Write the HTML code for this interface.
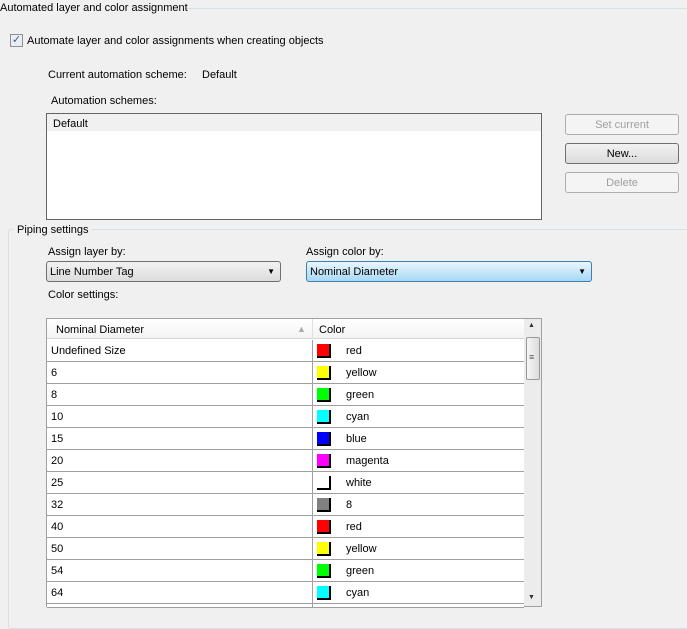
<!DOCTYPE html>
<html><head><style>
*{margin:0;padding:0;box-sizing:border-box}
body{width:687px;height:620px;background:#f0f0f0;font-family:"Liberation Sans",sans-serif;font-size:11px;color:#000;position:relative;overflow:hidden}
.a{position:absolute;white-space:nowrap}
.btn{position:absolute;left:565px;width:114px;height:21px;border:1px solid #adadad;border-radius:3px;background:#f4f4f4;color:#a0a0a0;text-align:center;line-height:20px}
.row{position:absolute;left:47px;width:477px;height:22px;border-bottom:1px solid #a0a0a0;background:#fff}
.row span{position:absolute;top:5px}
.sw{position:absolute;left:270px;top:4px;width:14px;height:14px;border-right:2px solid #000;border-bottom:2px solid #000}
.cs{position:absolute;left:265px;top:0;width:1px;height:22px;background:#a0a0a0}
</style></head><body>
<div class="a" style="top:8px;height:1px;background:#d5dfe5;left:185px;width:502px"></div>
<div class="a" style="left:0;top:2px;">Automated layer and color assignment</div>
<div class="a" style="left:10px;top:34px;width:13px;height:13px;border:1px solid #8e8f8f;background:#e8eef4;font-size:11px;line-height:11px;text-align:center;color:#4a5a8a">✓</div>
<div class="a" style="left:27px;top:35px">Automate layer and color assignments when creating objects</div>
<div class="a" style="left:48px;top:69px">Current automation scheme:</div>
<div class="a" style="left:202px;top:69px">Default</div>
<div class="a" style="left:51px;top:95px">Automation schemes:</div>
<div class="a" style="left:46px;top:113px;width:496px;height:107px;border:1px solid #646464;background:#fff">
<div style="height:17px;background:#f0f0f0;padding:4px 0 0 6px">Default</div></div>
<div class="btn" style="top:114px">Set current</div>
<div class="btn" style="top:143px;color:#000;border-color:#707070;background:linear-gradient(#f2f2f2,#dcdcdc)">New...</div>
<div class="btn" style="top:172px">Delete</div>
<div class="a" style="left:8px;top:229px;width:690px;height:400px;border:1px solid #d5dfe5;border-radius:3px"></div>
<div class="a" style="left:14px;top:224px;background:#f0f0f0;padding:0 3px">Piping settings</div>
<div class="a" style="left:48px;top:246px">Assign layer by:</div>
<div class="a" style="left:306px;top:246px">Assign color by:</div>
<div class="a" style="left:46px;top:261px;width:235px;height:21px;border:1px solid #707070;border-radius:3px;background:linear-gradient(#f2f2f2,#dcdcdc);padding:4px 3px">Line Number Tag<span style="position:absolute;right:5px;top:5px;font-size:8px">▼</span></div>
<div class="a" style="left:306px;top:261px;width:286px;height:21px;border:1px solid #3c7fb1;border-radius:3px;background:linear-gradient(#eaf6fd,#a7d9f5);padding:4px 3px">Nominal Diameter<span style="position:absolute;right:5px;top:5px;font-size:8px">▼</span></div>
<div class="a" style="left:48px;top:289px">Color settings:</div>
<div class="a" style="left:46px;top:318px;width:496px;height:289px;border:1px solid #a0a0a0;background:#fff"></div>
<div class="a" style="left:47px;top:319px;width:477px;height:20px;background:linear-gradient(#fff,#f3f3f3);border-bottom:1px solid #d5d5d5"><span class="a" style="left:9px;top:5px">Nominal Diameter</span><span class="a" style="left:250px;top:5px;color:#aaa;font-size:9px">▲</span><div class="a" style="left:265px;top:0;width:1px;height:20px;background:#e0e0e0"></div><span class="a" style="left:272px;top:5px">Color</span></div>
<div class="a" style="left:524px;top:319px;width:17px;height:287px;background:#ececec"></div>
<div class="a" style="left:528px;top:322px;font-size:7px;color:#333">▲</div>
<div class="a" style="left:528px;top:594px;font-size:7px;color:#333">▼</div>
<div class="a" style="left:526px;top:337px;width:14px;height:43px;border:1px solid #999;border-radius:2px;background:linear-gradient(90deg,#f5f5f5,#dcdcdc)"><span class="a" style="left:2px;top:14px;font-size:9px;color:#555">≡</span></div>
<div id="rows"></div>
<script>
var d=[["Undefined Size","#f00","red"],["6","#ff0","yellow"],["8","#0f0","green"],["10","#0ff","cyan"],["15","#00f","blue"],["20","#f0f","magenta"],["25","#fff","white"],["32","#808080","8"],["40","#f00","red"],["50","#ff0","yellow"],["54","#0f0","green"],["64","#0ff","cyan"],["","",""]];
var h="";d.forEach(function(r,i){var t=340+i*22,ht=i==12?4:22;h+='<div class="row" style="top:'+t+'px;height:'+ht+'px"><span style="left:4px">'+r[0]+'</span><div class="cs" style="height:'+ht+'px"></div>'+(r[1]?'<div class="sw" style="background:'+r[1]+'"></div>':'')+'<span style="left:299px">'+r[2]+'</span></div>'});
document.getElementById("rows").innerHTML=h;
</script>
</body></html>
